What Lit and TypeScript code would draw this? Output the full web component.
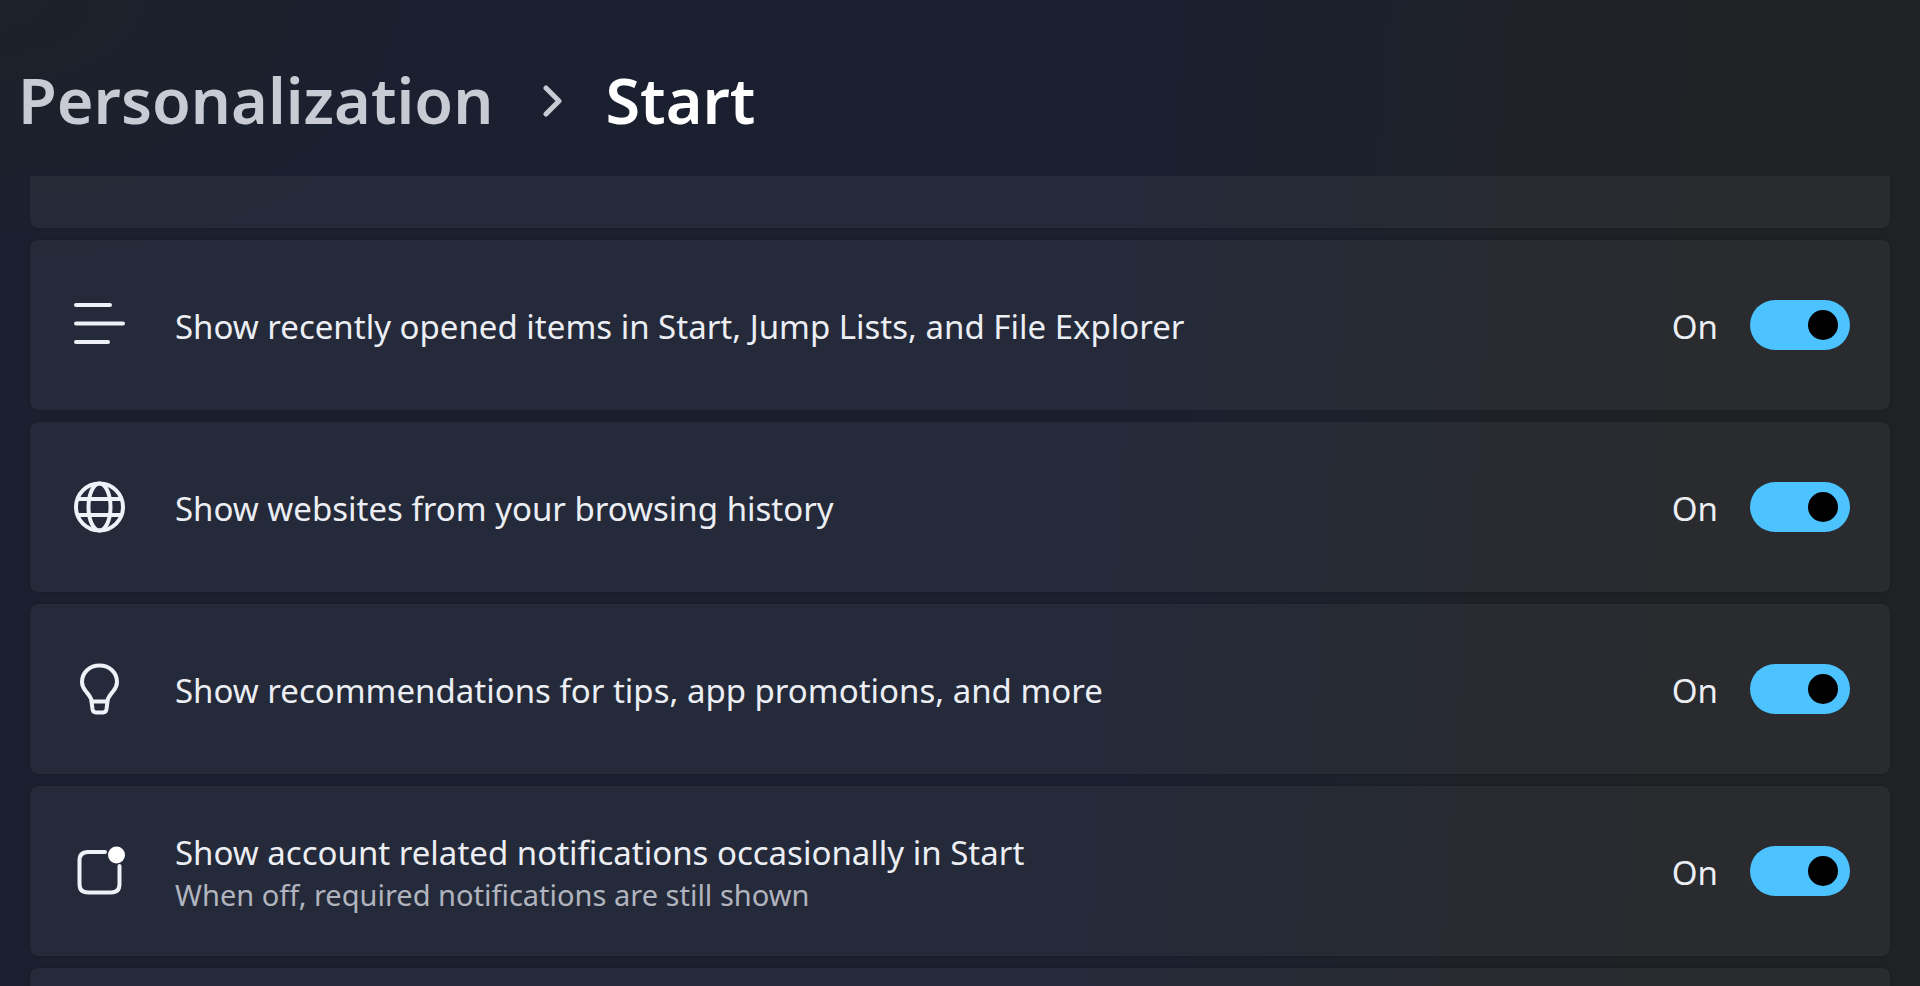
import { LitElement, html, css, svg, nothing } from "lit";
import { customElement, property, state } from "lit/decorators.js";

type IconName = "list" | "globe" | "bulb" | "notice";

interface Setting {
  id: string;
  icon: IconName;
  title: string;
  note?: string;
  on: boolean;
}

const glyphs = {
  list: svg`<path d="M6 10H40M6 28.500H53M6 47H38" />`,
  globe: svg`
    <circle cx="29.500" cy="30" r="23.500" />
    <ellipse cx="29.500" cy="30" rx="11" ry="23.500" />
    <path d="M8 22H51M8 38H51" />`,
  bulb: svg`
    <path d="M22 43.500C21.500 38.500 19 36 16 32.500C13 29 12 26 12 23C12 13.500 19.500 6.500 29.500 6.500S47 13.500 47 23C47 26 46 29 43 32.500C40 36 37.500 38.500 37 43.500" />
    <path d="M21.500 42.500H37.500L36.500 50C36.100 52.500 35 53.500 33 53.500H26C24 53.500 22.900 52.500 22.500 50Z" />`,
  notice: svg`
    <path d="M35 11H18Q9.500 11 9.500 19.500V43Q9.500 51.500 18 51.500H41Q49.500 51.500 49.500 43V25" />
    <circle class="dot" cx="46.500" cy="14" r="8.500" />`,
};

@customElement("setting-row")
export class SettingRow extends LitElement {
  @property({ attribute: false }) setting!: Setting;
  @state() private on = true;

  static styles = css`
    :host {
      display: flex;
      align-items: center;
      box-sizing: border-box;
      height: 170px;
      padding: 0 40px;
      border-radius: 8px;
      background: rgba(255, 255, 255, 0.048);
      box-shadow: 0 0 2px rgba(0, 0, 0, 0.35);
      color: #eceef4;
      font-size: 33px;
      line-height: 44px;
    }
    .icon {
      flex: none;
      width: 60px;
      height: 60px;
      margin-right: 45px;
      fill: none;
      stroke: #eef1f8;
      stroke-width: 4;
      stroke-linecap: round;
      stroke-linejoin: round;
    }
    .dot {
      fill: #fff;
      stroke: none;
    }
    .text {
      flex: 1;
      min-width: 0;
      padding-top: 4px;
    }
    .title,
    .note {
      display: block;
    }
    .note {
      color: #b1b4be;
      font-size: 29px;
      line-height: 40px;
    }
    .value {
      padding-top: 4px;
      margin-right: 32px;
    }
    .switch {
      appearance: none;
      flex: none;
      display: flex;
      align-items: center;
      box-sizing: border-box;
      width: 100px;
      height: 50px;
      margin: 0;
      padding: 0 12px;
      border-radius: 25px;
      background: transparent;
      border: 2px solid #9a9da5;
      cursor: pointer;
    }
    .switch::before {
      content: "";
      width: 30px;
      height: 30px;
      border-radius: 50%;
      background: #c8cbd3;
    }
    .switch:checked {
      justify-content: flex-end;
      border: 0;
      background: #4cc2ff;
    }
    .switch:checked::before {
      background: #000;
    }
  `;

  willUpdate(changed: Map<string, unknown>) {
    if (changed.has("setting")) this.on = this.setting.on;
  }

  private toggle(e: Event) {
    this.on = (e.target as HTMLInputElement).checked;
  }

  render() {
    const s = this.setting;
    return html`
      <svg class="icon" viewBox="0 0 60 60" aria-hidden="true">${glyphs[s.icon]}</svg>
      <label class="text" for=${s.id}>
        <span class="title">${s.title}</span>
        ${s.note ? html`<span class="note">${s.note}</span>` : nothing}
      </label>
      <span class="value">${this.on ? "On" : "Off"}</span>
      <input class="switch" id=${s.id} type="checkbox" role="switch" .checked=${this.on} @change=${this.toggle} />
    `;
  }
}

@customElement("app-root")
export class AppRoot extends LitElement {
  private settings: Setting[] = [
    { id: "recent", icon: "list", title: "Show recently opened items in Start, Jump Lists, and File Explorer", on: true },
    { id: "sites", icon: "globe", title: "Show websites from your browsing history", on: true },
    { id: "tips", icon: "bulb", title: "Show recommendations for tips, app promotions, and more", on: true },
    {
      id: "account",
      icon: "notice",
      title: "Show account related notifications occasionally in Start",
      note: "When off, required notifications are still shown",
      on: true,
    },
  ];

  static styles = css`
    :host {
      display: flex;
      flex-direction: column;
      height: 100vh;
      overflow: hidden;
      font-family: "Segoe UI", "Noto Sans", "Open Sans", sans-serif;
      background:
        radial-gradient(ellipse 440px 260px at 0 0, #1d2128, transparent),
        linear-gradient(94deg, #1a2030 0%, #1a2030 58%, #1e2128 76%, #202124 90%);
    }
    .crumbs {
      display: flex;
      align-items: center;
      flex: none;
      box-sizing: border-box;
      height: 176px;
      padding: 24px 18px 0;
      font-size: 63px;
      font-weight: 600;
      line-height: 90px;
    }
    .parent {
      color: #c8cbd3;
      text-decoration: none;
    }
    .chevron {
      width: 24px;
      height: 32px;
      margin: 2px 40px 0 48px;
      fill: none;
      stroke: #c8cbd3;
      stroke-width: 5;
      stroke-linecap: round;
      stroke-linejoin: round;
    }
    .current {
      margin: 0;
      font: inherit;
      color: #fff;
    }
    .list {
      display: flex;
      flex-direction: column;
      gap: 12px;
      flex: 1;
      min-height: 0;
      overflow: hidden;
      padding: 0 30px;
    }
    .edge {
      flex: none;
      height: 52px;
      border-radius: 0 0 8px 8px;
      background: rgba(255, 255, 255, 0.048);
      box-shadow: 0 0 2px rgba(0, 0, 0, 0.35);
    }
    .edge.last {
      height: 170px;
      border-radius: 8px;
    }
    setting-row {
      flex: none;
    }
  `;

  render() {
    return html`
      <nav class="crumbs" aria-label="Breadcrumb">
        <a class="parent" href="#personalization">Personalization</a>
        <svg class="chevron" viewBox="0 0 24 32" aria-hidden="true"><path d="M5 3L18 16L5 29" /></svg>
        <h1 class="current">Start</h1>
      </nav>
      <main class="list">
        <div class="edge"></div>
        ${this.settings.map((s) => html`<setting-row .setting=${s}></setting-row>`)}
        <div class="edge last"></div>
      </main>
    `;
  }
}
